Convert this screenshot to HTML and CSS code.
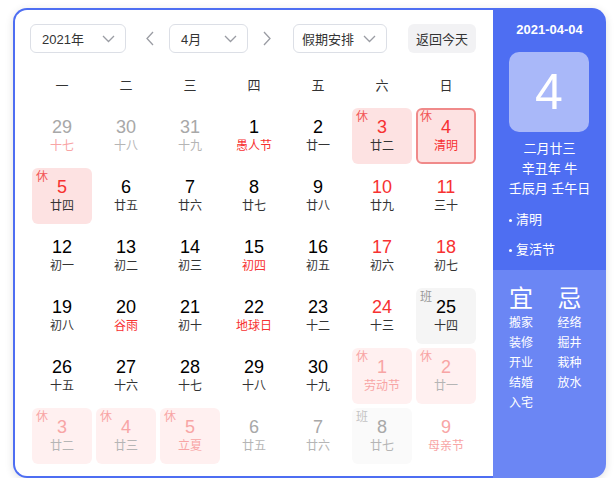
FILE: index.html
```html
<!DOCTYPE html>
<html lang="zh-CN">
<head>
    <meta charset="UTF-8">
    <title>万年历</title>
    <link rel="stylesheet" href="styles.css">
</head>
<body>
    <div class="calendar">
        <div class="main">
            <div class="toolbar">
                <div class="select year">2021年<svg class="caret" width="13" height="8" viewBox="0 0 13 8"><path d="M1 1l5.5 5.5L12 1"/></svg></div>
                <button class="arrow prev"><svg width="8" height="15" viewBox="0 0 8 15"><path d="M7 1L1 7.5 7 14"/></svg></button>
                <div class="select month">4月<svg class="caret" width="13" height="8" viewBox="0 0 13 8"><path d="M1 1l5.5 5.5L12 1"/></svg></div>
                <button class="arrow next"><svg width="8" height="15" viewBox="0 0 8 15"><path d="M1 1l6 6.5L1 14"/></svg></button>
                <div class="select holiday">假期安排<svg class="caret" width="13" height="8" viewBox="0 0 13 8"><path d="M1 1l5.5 5.5L12 1"/></svg></div>
                <button class="today-btn">返回今天</button>
            </div>

            <div class="weekdays">
                <span>一</span><span>二</span><span>三</span><span>四</span><span>五</span><span>六</span><span>日</span>
            </div>

            <div class="days">
                <!-- week 1 -->
                <div class="day other"><span class="num">29</span><span class="lunar pink">十七</span></div>
                <div class="day other"><span class="num">30</span><span class="lunar">十八</span></div>
                <div class="day other"><span class="num">31</span><span class="lunar">十九</span></div>
                <div class="day"><span class="num">1</span><span class="lunar red">愚人节</span></div>
                <div class="day"><span class="num">2</span><span class="lunar">廿一</span></div>
                <div class="day rest"><i class="tag">休</i><span class="num red">3</span><span class="lunar">廿二</span></div>
                <div class="day rest today"><i class="tag">休</i><span class="num red">4</span><span class="lunar red">清明</span></div>
                <!-- week 2 -->
                <div class="day rest"><i class="tag">休</i><span class="num red">5</span><span class="lunar">廿四</span></div>
                <div class="day"><span class="num">6</span><span class="lunar">廿五</span></div>
                <div class="day"><span class="num">7</span><span class="lunar">廿六</span></div>
                <div class="day"><span class="num">8</span><span class="lunar">廿七</span></div>
                <div class="day"><span class="num">9</span><span class="lunar">廿八</span></div>
                <div class="day"><span class="num red">10</span><span class="lunar">廿九</span></div>
                <div class="day"><span class="num red">11</span><span class="lunar">三十</span></div>
                <!-- week 3 -->
                <div class="day"><span class="num">12</span><span class="lunar">初一</span></div>
                <div class="day"><span class="num">13</span><span class="lunar">初二</span></div>
                <div class="day"><span class="num">14</span><span class="lunar">初三</span></div>
                <div class="day"><span class="num">15</span><span class="lunar red">初四</span></div>
                <div class="day"><span class="num">16</span><span class="lunar">初五</span></div>
                <div class="day"><span class="num red">17</span><span class="lunar">初六</span></div>
                <div class="day"><span class="num red">18</span><span class="lunar">初七</span></div>
                <!-- week 4 -->
                <div class="day"><span class="num">19</span><span class="lunar">初八</span></div>
                <div class="day"><span class="num">20</span><span class="lunar red">谷雨</span></div>
                <div class="day"><span class="num">21</span><span class="lunar">初十</span></div>
                <div class="day"><span class="num">22</span><span class="lunar red">地球日</span></div>
                <div class="day"><span class="num">23</span><span class="lunar">十二</span></div>
                <div class="day"><span class="num red">24</span><span class="lunar">十三</span></div>
                <div class="day work"><i class="tag">班</i><span class="num">25</span><span class="lunar">十四</span></div>
                <!-- week 5 -->
                <div class="day"><span class="num">26</span><span class="lunar">十五</span></div>
                <div class="day"><span class="num">27</span><span class="lunar">十六</span></div>
                <div class="day"><span class="num">28</span><span class="lunar">十七</span></div>
                <div class="day"><span class="num">29</span><span class="lunar">十八</span></div>
                <div class="day"><span class="num">30</span><span class="lunar">十九</span></div>
                <div class="day other rest"><i class="tag">休</i><span class="num">1</span><span class="lunar pink">劳动节</span></div>
                <div class="day other rest"><i class="tag">休</i><span class="num">2</span><span class="lunar">廿一</span></div>
                <!-- week 6 -->
                <div class="day other rest"><i class="tag">休</i><span class="num">3</span><span class="lunar">廿二</span></div>
                <div class="day other rest"><i class="tag">休</i><span class="num">4</span><span class="lunar">廿三</span></div>
                <div class="day other rest"><i class="tag">休</i><span class="num">5</span><span class="lunar pink">立夏</span></div>
                <div class="day other"><span class="num">6</span><span class="lunar">廿五</span></div>
                <div class="day other"><span class="num">7</span><span class="lunar">廿六</span></div>
                <div class="day other work"><i class="tag">班</i><span class="num">8</span><span class="lunar">廿七</span></div>
                <div class="day other"><span class="num pink">9</span><span class="lunar pink">母亲节</span></div>
            </div>
        </div>

        <div class="side">
            <div class="side-top">
                <div class="side-date">2021-04-04</div>
                <div class="big-day">4</div>
                <div class="side-lunar">
                    <div>二月廿三</div>
                    <div>辛丑年 牛</div>
                    <div>壬辰月 壬午日</div>
                </div>
                <ul class="fest">
                    <li>清明</li>
                    <li>复活节</li>
                </ul>
            </div>
            <div class="side-bottom">
                <div class="col">
                    <div class="col-title">宜</div>
                    <div>搬家</div>
                    <div>装修</div>
                    <div>开业</div>
                    <div>结婚</div>
                    <div>入宅</div>
                </div>
                <div class="col">
                    <div class="col-title">忌</div>
                    <div>经络</div>
                    <div>掘井</div>
                    <div>栽种</div>
                    <div>放水</div>
                </div>
            </div>
        </div>
    </div>
</body>
</html>
```

FILE: styles.css
```css
body {
    margin: 0;
    background: #fff;
    font-family: "Liberation Sans", Arial, "Noto Sans CJK SC", sans-serif;
    color: #333;
}
.calendar {
    display: flex;
    width: 593px;
    height: 470px;
    margin: 8px 0 0 13px;
    border-radius: 14px;
    box-shadow: 0 2px 8px rgba(0, 0, 0, 0.12);
}
.main {
    flex: 1;
    background: #fff;
    border: 2px solid #4e6ef2;
    border-right: none;
    border-radius: 14px 0 0 14px;
    padding: 14px 17px 12px;
}

/* toolbar */
.toolbar {
    display: flex;
    align-items: center;
    margin: 0 0 0 -2px;
    height: 29px;
}
.select {
    box-sizing: border-box;
    height: 29px;
    display: flex;
    align-items: center;
    justify-content: space-between;
    padding: 0 10px 0 11px;
    border: 1px solid #dcdfe6;
    border-radius: 6px;
    font-size: 13px;
    color: #333;
}
.select.year { width: 96px; }
.select.month { width: 79px; margin-left: 9px; }
.select.holiday { width: 94px; margin-left: 16px; padding-left: 8px; }
.caret path,
.arrow path {
    fill: none;
    stroke: #9a9ca3;
    stroke-width: 1.3;
}
.arrow {
    width: 20px;
    height: 29px;
    padding: 0;
    border: none;
    background: none;
    display: flex;
    align-items: center;
    justify-content: center;
}
.arrow.prev { margin-left: 14px; }
.arrow.next { margin-left: 9px; }
.today-btn {
    margin-left: auto;
    width: 68px;
    height: 29px;
    padding: 0;
    border: none;
    border-radius: 6px;
    background: #f2f2f4;
    font-family: inherit;
    font-size: 13px;
    color: #333;
}

/* week header */
.weekdays {
    display: grid;
    grid-template-columns: repeat(7, 60px);
    column-gap: 4px;
    margin-top: 23px;
    height: 20px;
    line-height: 20px;
    font-size: 13px;
    text-align: center;
    color: #333;
}

/* day grid */
.days {
    display: grid;
    grid-template-columns: repeat(7, 60px);
    grid-auto-rows: 56px;
    gap: 4px;
    margin-top: 12px;
}
.day {
    position: relative;
    box-sizing: border-box;
    display: flex;
    flex-direction: column;
    align-items: center;
    padding-top: 8px;
    border-radius: 6px;
}
.num {
    font-size: 18px;
    line-height: 22px;
    color: #000;
}
.lunar {
    font-size: 12px;
    line-height: 16px;
    color: #333;
}
.red { color: #f73131; }
.tag {
    position: absolute;
    left: 4px;
    top: 2px;
    font-style: normal;
    font-size: 12px;
    line-height: 14px;
    color: #f25656;
}
.day.rest { background: #fde2e2; }
.day.today { border: 2px solid #f08a8a; padding-top: 6px; }
.day.today .tag { left: 2px; top: 0; }
.day.work { background: #f5f5f5; }
.day.work .tag { color: #999; }

/* days outside the month */
.day.other .num { color: #a8a8a8; }
.day.other .lunar { color: #b5b5b5; }
.day.other.rest { background: #fff0f0; }
.day.other.rest .num,
.day.other.rest .tag { color: #f8a5a5; }
.day.other.work { background: #fafafa; }
.day.other.work .tag { color: #c4c4c4; }
.day.other .pink,
.pink { color: #f8a5a5; }

/* side panel */
.side {
    width: 113px;
    display: flex;
    flex-direction: column;
    border-radius: 0 14px 14px 0;
    overflow: hidden;
    color: #fff;
}
.side-top {
    height: 262px;
    background: #4e6ef2;
    padding: 12px 0 0 16px;
    box-sizing: border-box;
}
.side-date {
    font-size: 13px;
    font-weight: bold;
    line-height: 20px;
    text-align: center;
    margin-left: -16px;
}
.big-day {
    width: 80px;
    height: 80px;
    margin: 12px 0 0;
    border-radius: 10px;
    background: #a9b8f9;
    font-size: 50px;
    line-height: 80px;
    text-align: center;
}
.side-lunar {
    margin: 7px 0 0 -16px;
    font-size: 13px;
    line-height: 20px;
    text-align: center;
}
.fest {
    list-style: none;
    margin: 11px 0 0;
    padding: 0;
    font-size: 13px;
    line-height: 20px;
}
.fest li { margin-bottom: 10px; }
.fest li::before {
    content: "";
    display: inline-block;
    width: 3px;
    height: 3px;
    border-radius: 50%;
    background: #fff;
    margin-right: 4px;
    vertical-align: middle;
}
.side-bottom {
    flex: 1;
    background: #6b86f4;
    display: flex;
    padding: 16px 0 0 16px;
    font-size: 12px;
    line-height: 20px;
}
.col { width: 57px; }
.col-title {
    font-size: 24px;
    line-height: 26px;
    margin-bottom: 1px;
}
```
